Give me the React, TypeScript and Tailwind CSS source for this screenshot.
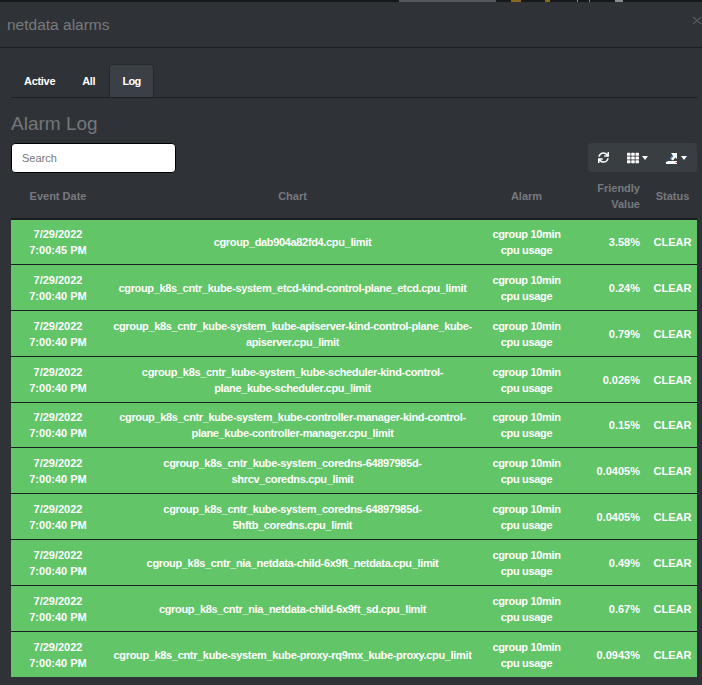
import { FaSync, FaTh } from "react-icons/fa";

const rows: [string, string, string][] = [
  ["7:00:45 PM", "cgroup_dab904a82fd4.cpu_limit", "3.58%"],
  ["7:00:40 PM", "cgroup_k8s_cntr_kube-system_etcd-kind-control-plane_etcd.cpu_limit", "0.24%"],
  ["7:00:40 PM", "cgroup_k8s_cntr_kube-system_kube-apiserver-kind-control-plane_kube-apiserver.cpu_limit", "0.79%"],
  ["7:00:40 PM", "cgroup_k8s_cntr_kube-system_kube-scheduler-kind-control-plane_kube-scheduler.cpu_limit", "0.026%"],
  ["7:00:40 PM", "cgroup_k8s_cntr_kube-system_kube-controller-manager-kind-control-plane_kube-controller-manager.cpu_limit", "0.15%"],
  ["7:00:40 PM", "cgroup_k8s_cntr_kube-system_coredns-64897985d-shrcv_coredns.cpu_limit", "0.0405%"],
  ["7:00:40 PM", "cgroup_k8s_cntr_kube-system_coredns-64897985d-5hftb_coredns.cpu_limit", "0.0405%"],
  ["7:00:40 PM", "cgroup_k8s_cntr_nia_netdata-child-6x9ft_netdata.cpu_limit", "0.49%"],
  ["7:00:40 PM", "cgroup_k8s_cntr_nia_netdata-child-6x9ft_sd.cpu_limit", "0.67%"],
  ["7:00:40 PM", "cgroup_k8s_cntr_kube-system_kube-proxy-rq9mx_kube-proxy.cpu_limit", "0.0943%"],
];

function Caret() {
  return <span className="ml-[3px] inline-block h-0 w-0 border-x-[3.5px] border-t-[4px] border-x-transparent border-t-white" />;
}

export default function App() {
  return (
    <div className="h-[685px] w-[702px] overflow-hidden bg-[#2f3337] font-['Liberation_Sans',Arial,sans-serif]">
      <div className="flex h-[2px] bg-[#16181b] pl-[399px]">
        <span className="w-[97px] bg-[#55585c]" />
        <span className="ml-[15px] w-[10px] bg-[#8a6a1c]" />
        <span className="ml-[24px] w-[5px] bg-[#8a6a1c]" />
        <span className="ml-[27px] w-[1px] bg-[#8a8c8f]" />
        <span className="ml-[11px] w-[1px] bg-[#8a8c8f]" />
        <span className="ml-[25px] w-[8px] bg-[#8a8c8f]" />
      </div>
      <header className="relative flex h-[46px] items-center border-b border-[#1c1e21] pl-[7px] text-[15.5px] text-[#777a7e]">
        netdata alarms
        <svg className="absolute right-0 top-[14px]" width="10" height="9" viewBox="0 0 10 9" fill="none" stroke="#55585c" strokeWidth="1.3">
          <path d="M1 1l4 3.5L9 1M1 8l4-3.5L9 8" />
        </svg>
      </header>
      <div className="px-[11px] pr-[5px]">
        <nav className="mt-[16px] flex h-[34px] items-stretch border-b border-[#1c1e21] text-[11px] font-bold tracking-[-0.3px] text-white">
          <a className="flex items-center pl-[13px] pr-[13px] pt-[1px]">Active</a>
          <a className="flex items-center px-[14px] pt-[1px]">All</a>
          <a className="flex items-center rounded-t border border-b-0 border-[#272a2d] bg-[#3b4047] px-[12px] pt-[1px] tracking-[-0.6px]">Log</a>
        </nav>
        <h2 className="mb-[8px] mt-[15px] text-[19px] leading-[22px] text-[#74777b]">Alarm Log</h2>
        <div className="flex items-start justify-between">
          <input
            placeholder="Search"
            className="h-[30px] w-[165px] rounded border border-black bg-white px-[10px] text-[11px] outline-none placeholder:text-[#777]"
          />
          <div className="flex h-[29px] w-[109px] items-center rounded bg-[#393e43] pl-[10px] text-white">
            <FaSync size={11} />
            <FaTh size={12} className="ml-[18px]" />
            <Caret />
            <svg className="ml-[18px]" width="12" height="12" viewBox="0 0 12 12">
              <path d="M4 6.5L6.5 3 5 1h6v6L9.5 5.5 7 8.5z" fill="#fff" />
              <path d="M4 6.5L6.5 3l1 1L5 7z" fill="#2f6db0" />
              <path d="M0 9h11v3H0z" fill="#fff" />
              <path d="M0 9h1.5v1H0z" fill="#2f6db0" />
              <path d="M9.5 10h1.5v1H9.5z" fill="#d33" />
            </svg>
            <Caret />
          </div>
        </div>
        <table className="mt-[4px] w-[686px] table-fixed border-collapse text-center text-[11px] font-bold leading-[16px]">
          <colgroup>
            <col className="w-[94px]" />
            <col className="w-[375px]" />
            <col className="w-[93px]" />
            <col className="w-[75px]" />
            <col className="w-[49px]" />
          </colgroup>
          <thead className="text-[#76797d]">
            <tr className="h-[42px] border-b-2 border-[#1c1e21]">
              <th className="pb-[4px] font-bold">Event Date</th>
              <th className="pb-[4px] font-bold">Chart</th>
              <th className="pb-[4px] font-bold">Alarm</th>
              <th className="pb-[4px] pr-[8px] text-right font-bold">Friendly Value</th>
              <th className="pb-[4px] font-bold">Status</th>
            </tr>
          </thead>
          <tbody className="text-white">
            {rows.map(([time, chart, value], i) => (
              <tr key={i} className="h-[45.8px] border-t border-[#1c1e21] bg-[#62c567]">
                <td className="pt-[0.5px]">
                  7/29/2022
                  <br />
                  {time}
                </td>
                <td className="px-[7px] pt-[0.5px] tracking-[-0.34px]">{chart}</td>
                <td className="px-[8px] pt-[0.5px] tracking-[-0.33px]">cgroup 10min cpu usage</td>
                <td className="pr-[8px] pt-[0.5px] text-right">{value}</td>
                <td className="pt-[0.5px]">CLEAR</td>
              </tr>
            ))}
          </tbody>
        </table>
      </div>
    </div>
  );
}
